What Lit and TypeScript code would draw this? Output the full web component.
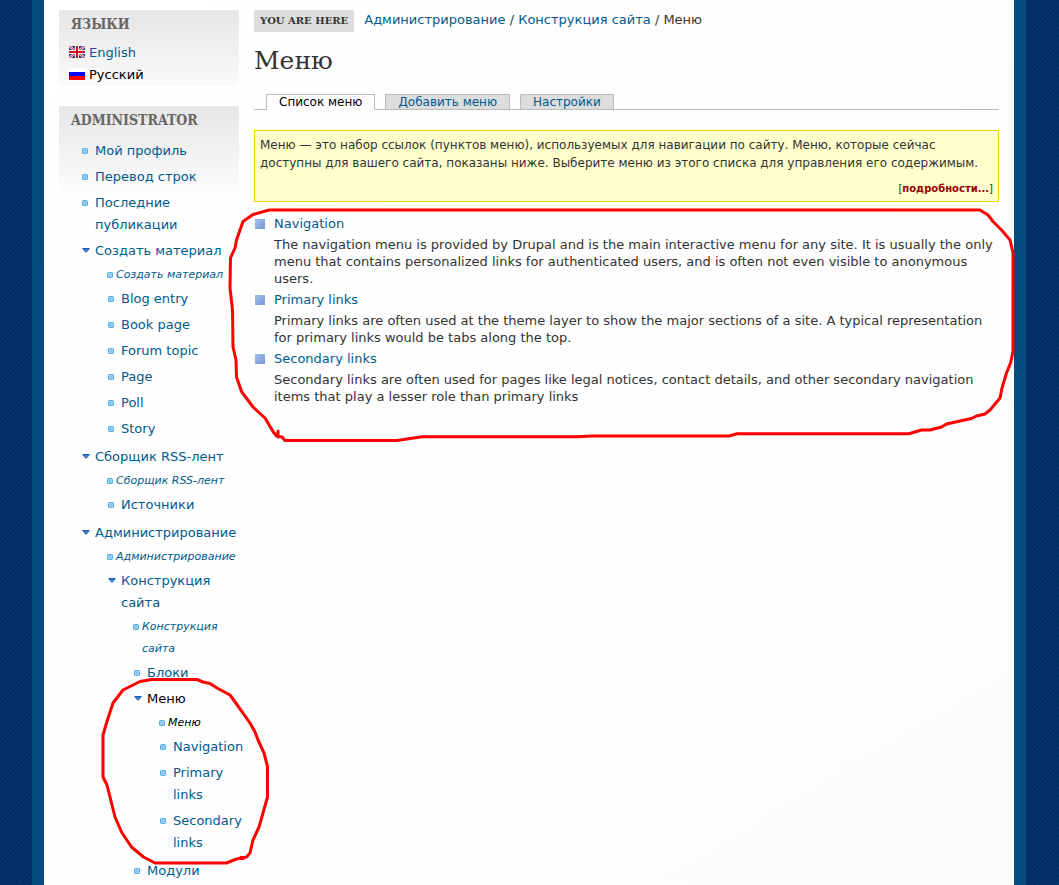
import { LitElement, html, css, svg, nothing, TemplateResult } from "lit";
import { customElement, property } from "lit/decorators.js";

interface MenuNode {
  label: string;
  current?: boolean;
  children?: MenuNode[];
}

const MENU: MenuNode[] = [
  { label: "Мой профиль" },
  { label: "Перевод строк" },
  { label: "Последние публикации" },
  {
    label: "Создать материал",
    children: ["Blog entry", "Book page", "Forum topic", "Page", "Poll", "Story"].map((label) => ({ label })),
  },
  { label: "Сборщик RSS-лент", children: [{ label: "Источники" }] },
  {
    label: "Администрирование",
    children: [
      {
        label: "Конструкция сайта",
        children: [
          { label: "Блоки" },
          {
            label: "Меню",
            current: true,
            children: [{ label: "Navigation" }, { label: "Primary links" }, { label: "Secondary links" }],
          },
          { label: "Модули" },
        ],
      },
    ],
  },
];

const MENUS = [
  {
    name: "Navigation",
    text: "The navigation menu is provided by Drupal and is the main interactive menu for any site. It is usually the only menu that contains personalized links for authenticated users, and is often not even visible to anonymous users.",
  },
  {
    name: "Primary links",
    text: "Primary links are often used at the theme layer to show the major sections of a site. A typical representation for primary links would be tabs along the top.",
  },
  {
    name: "Secondary links",
    text: "Secondary links are often used for pages like legal notices, contact details, and other secondary navigation items that play a lesser role than primary links",
  },
];

const dot = html`<svg class="dot" width="6" height="6" viewBox="0 0 6 6" aria-hidden="true">
  <rect width="6" height="6" rx="1.800" fill="#4fb0e8" />
  <rect x="1" y="1" width="4" height="4" rx="1" fill="#a4d2f0" />
  <rect x="2" y="2" width="2" height="2" fill="#86bfe6" />
</svg>`;

const arrow = html`<svg class="arrow" width="8" height="5" viewBox="0 0 8 5" aria-hidden="true">
  <path d="M0.500 0H7.500V1L4.500 4.500H3.500L0.500 1Z" fill="#1c5cb4" />
  <path d="M2 1.500H6L4 3.800Z" fill="#5a96e0" />
</svg>`;

const flagUk = html`<svg class="flag" width="16" height="12" viewBox="0 0 16 12" aria-hidden="true">
  <rect width="16" height="12" fill="#2b3a7c" />
  <path d="M0 0L16 12M16 0L0 12" stroke="#f4dfe6" stroke-width="2.400" />
  <path d="M0 0L16 12M16 0L0 12" stroke="#d0324a" stroke-width="1" />
  <path d="M8 0V12M0 6H16" stroke="#f8e6ea" stroke-width="4" />
  <path d="M8 0V12M0 6H16" stroke="#cf142b" stroke-width="2" />
</svg>`;

const flagRu = html`<svg class="flag" width="16" height="12" viewBox="0 0 16 12" aria-hidden="true">
  <rect width="16" height="4" fill="#fff" />
  <rect y="4" width="16" height="4" fill="#00f" />
  <rect y="8" width="16" height="4" fill="#f00" />
</svg>`;

@customElement("menu-tree")
export class MenuTree extends LitElement {
  @property({ attribute: false }) nodes: MenuNode[] = [];

  static styles = css`
    :host {
      display: block;
    }
    .list {
      list-style: none;
      margin: 0;
      padding: 0 0 0 26px;
    }
    .root {
      padding-left: 23px;
    }
    .item {
      padding: 2px 0;
    }
    .overview {
      padding: 2px 0 0;
      font-size: 11px;
      font-style: italic;
    }
    .row {
      display: grid;
      grid-template-columns: 13px 1fr;
    }
    .overview .row {
      grid-template-columns: 9px 1fr;
      margin-left: -1px;
    }
    .mark {
      display: flex;
      align-items: center;
      height: 22px;
    }
    .arrow {
      margin: 0 0 2px;
    }
    .link {
      color: #005a8c;
      text-decoration: none;
    }
    .current {
      color: #000;
    }
  `;

  private row(node: MenuNode, mark: TemplateResult) {
    return html`<div class="row">
      <span class="mark">${mark}</span>
      <span><a class="link ${node.current ? "current" : ""}" href="#">${node.label}</a></span>
    </div>`;
  }

  private list(nodes: MenuNode[], parent?: MenuNode): TemplateResult {
    return html`<ul class="list ${parent ? "" : "root"}">
      ${parent ? html`<li class="overview">${this.row(parent, dot)}</li>` : nothing}
      ${nodes.map(
        (n) => html`<li class="item">
          ${this.row(n, n.children ? arrow : dot)} ${n.children ? this.list(n.children, n) : nothing}
        </li>`,
      )}
    </ul>`;
  }

  render() {
    return this.list(this.nodes);
  }
}

@customElement("app-root")
export class AppRoot extends LitElement {
  static styles = css`
    :host {
      display: flex;
      justify-content: center;
      min-height: 100vh;
      padding-right: 1px;
      font: 13px/22px "DejaVu Sans", Verdana, sans-serif;
      color: #333;
      background: linear-gradient(135deg, #00346b 0 38%, #00245a 38% 50%, #00346b 50% 88%, #00245a 88%) 0 0 / 5px 5px;
    }
    .page {
      position: relative;
      display: grid;
      grid-template-columns: 180px minmax(0, 1fr);
      gap: 15px;
      align-items: start;
      box-sizing: border-box;
      width: 100%;
      max-width: 994px;
      border: solid #044a7e;
      border-width: 0 12px;
      padding: 10px 15px 0;
      background: linear-gradient(150deg, #fff, #fcfcfc);
    }
    .link {
      color: #005a8c;
      text-decoration: none;
    }
    .side {
      display: flex;
      flex-direction: column;
      gap: 20px;
    }
    .block {
      padding-top: 3px;
      background: linear-gradient(#e6e6e6, #fdfdfd00 95px);
    }
    .block-title {
      margin: 0 0 7px;
      padding-left: 12px;
      font: bold 14px/22px "DejaVu Serif Condensed", "DejaVu Serif", serif;
      font-stretch: condensed;
      color: #666;
      text-transform: uppercase;
    }
    .langs {
      list-style: none;
      margin: 0;
      padding: 0 0 0 10px;
    }
    .lang {
      display: flex;
      align-items: center;
      gap: 4px;
    }
    .flag {
      margin-bottom: 2px;
    }
    .active {
      color: #000;
    }
    .crumbs {
      display: flex;
      align-items: center;
      gap: 10px;
    }
    .here {
      padding: 0 6px;
      background: #ddd;
      font: bold 10px/22px "DejaVu Serif", serif;
      text-transform: uppercase;
    }
    .trail {
      line-height: 20px;
      padding-bottom: 2px;
    }
    .title {
      margin: 11px 0 15px;
      font: 25px/36px "DejaVu Serif", serif;
    }
    .tabs {
      display: flex;
      gap: 10px;
      margin: 0 0 20px;
      padding: 0 12px;
      border-bottom: 1px solid #bbb;
      list-style: none;
    }
    .tab {
      display: block;
      padding: 0 12px;
      border: 1px solid #bbb;
      border-bottom: 0;
      background: #ddd;
      font-size: 12px;
      line-height: 14px;
    }
    .tab.active {
      margin-bottom: -1px;
      padding-bottom: 1px;
      background: #fefefe;
    }
    .help {
      padding: 5px;
      border: 1px solid #fc0;
      background: #ffc;
      font-size: 12px;
      line-height: 18px;
    }
    .help-text {
      margin: 0 0 9px;
    }
    .more {
      margin: 0;
      font-size: 10px;
      line-height: 15px;
      text-align: right;
    }
    .more-link {
      color: #900;
      font-weight: bold;
      text-decoration: none;
    }
    .menus {
      margin: 9px 0 0;
      line-height: 17px;
    }
    .name {
      display: flex;
      align-items: center;
      gap: 9px;
      padding: 4px 0 4px 1px;
    }
    .square {
      width: 10px;
      height: 10px;
      background: linear-gradient(135deg, #a3c0ea, #7596d6);
    }
    .about {
      margin: 0 0 0 20px;
    }
    .ink {
      position: absolute;
      top: 0;
      left: -12px;
      pointer-events: none;
    }
  `;

  private marks() {
    return svg`
      <g transform="translate(-32 0)" fill="none" stroke="#f00" stroke-width="3" stroke-linejoin="round" stroke-linecap="round">
        <path d="M269 210L253 214.500L243 221.500L240 230L236.500 240L235 248L230.500 258L230 288L232.500 310L233 347L236 360L236.500 377L241.500 391.500L253 407L265 418L273 431.500L276.500 436L282 437L285 440.500H397L422 436.700H577L592 436H729L737 433.700H909L921.500 430H930L941.500 427L946.500 424L971.500 418.500L976.500 416L985 414L990 410L1000 398L1002 388L1006.500 373L1010.500 363L1013 351.500V253L1010 240L1001.500 230L993 221.500L988 215L980 210Z" />
        <path d="M278 431V437" />
        <path d="M151.500 679.500H197L203 682L210 683.500L217 688L230 695L236.500 704L250 723L255 732L258 740L264 753L267.500 766.500V797L263 813L259 827L253 840L250 853L246.500 857L236.500 859L226.500 863H155L143.500 857L131.500 847L121.500 832L115 817L107 785L103 777V735L106.500 723L113 703L123 690L140 681.500Z" />
        <path d="M241 858L243 858" stroke-width="4" />
      </g>`;
  }

  render() {
    return html`<div class="page">
      <aside class="side">
        <section class="block">
          <h2 class="block-title">Языки</h2>
          <ul class="langs">
            <li class="lang">${flagUk}<a class="link" href="#">English</a></li>
            <li class="lang">${flagRu}<a class="link active" href="#">Русский</a></li>
          </ul>
        </section>
        <nav class="block">
          <h2 class="block-title">administrator</h2>
          <menu-tree .nodes=${MENU}></menu-tree>
        </nav>
      </aside>
      <main>
        <nav class="crumbs">
          <span class="here">You are here</span>
          <span class="trail"
            ><a class="link" href="#">Администрирование</a> / <a class="link" href="#">Конструкция сайта</a> / Меню</span
          >
        </nav>
        <h1 class="title">Меню</h1>
        <ul class="tabs">
          <li><a class="link tab active" href="#">Список меню</a></li>
          <li><a class="link tab" href="#">Добавить меню</a></li>
          <li><a class="link tab" href="#">Настройки</a></li>
        </ul>
        <div class="help">
          <p class="help-text">
            Меню — это набор ссылок (пунктов меню), используемых для навигации по сайту. Меню, которые сейчас доступны для
            вашего сайта, показаны ниже. Выберите меню из этого списка для управления его содержимым.
          </p>
          <p class="more">[<a class="more-link" href="#">подробности...</a>]</p>
        </div>
        <dl class="menus">
          ${MENUS.map(
            (m) => html`<dt class="name"><span class="square"></span><a class="link" href="#">${m.name}</a></dt>
              <dd class="about">${m.text}</dd>`,
          )}
        </dl>
      </main>
      <svg class="ink" width="994" height="885" viewBox="0 0 994 885" aria-hidden="true">${this.marks()}</svg>
    </div>`;
  }
}
